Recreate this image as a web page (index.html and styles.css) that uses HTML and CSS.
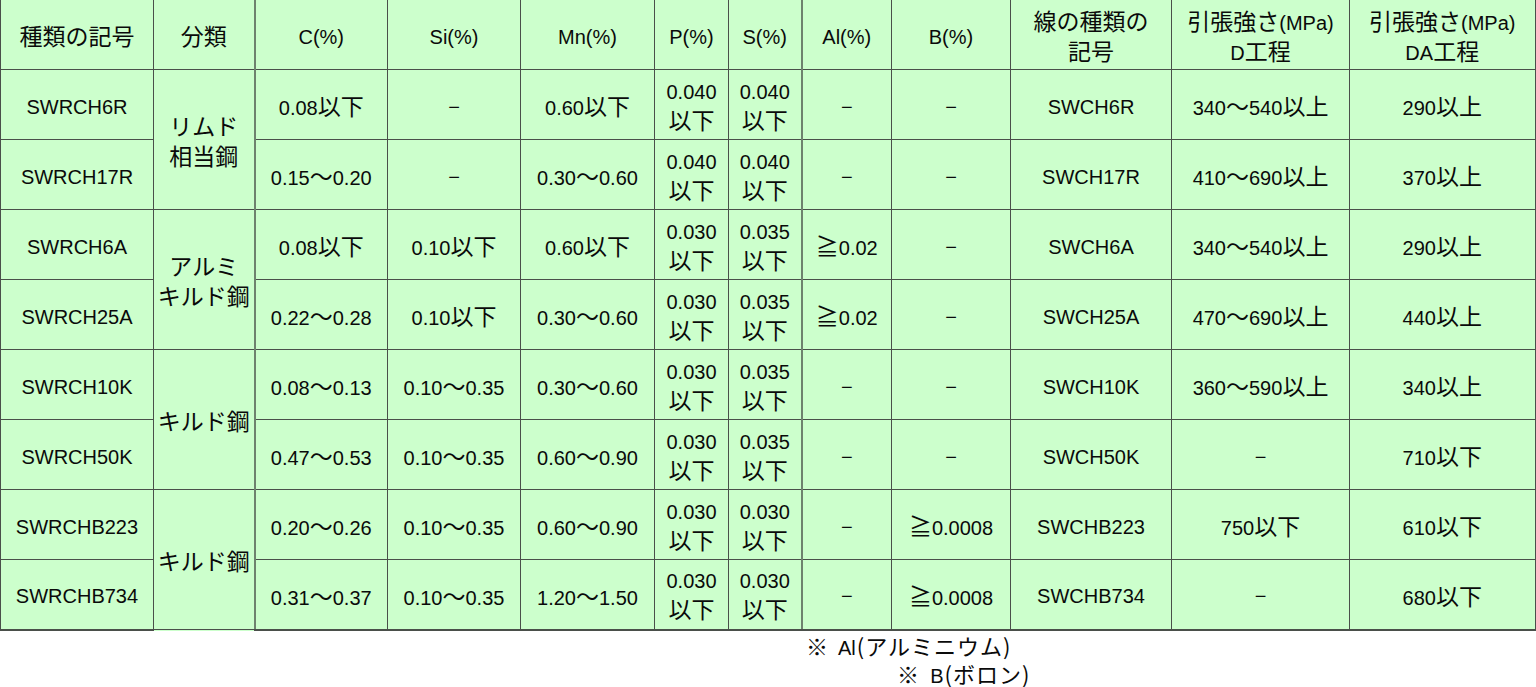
FILE: index.html
```html
<!DOCTYPE html>
<html lang="ja">
<head>
<meta charset="utf-8">
<title>SWRCH</title>
<link rel="stylesheet" href="styles.css">
</head>
<body>
<table class="spec">
  <colgroup>
    <col class="w1"><col class="w2"><col class="w3"><col class="w4"><col class="w5"><col class="w6">
    <col class="w7"><col class="w8"><col class="w9"><col class="w10"><col class="w11"><col class="w12">
  </colgroup>
  <tr class="head">
    <td><span class="j">種類の記号</span></td>
    <td><span class="j">分類</span></td>
    <td class="sep">C(%)</td>
    <td>Si(%)</td>
    <td>Mn(%)</td>
    <td>P(%)</td>
    <td>S(%)</td>
    <td class="sep">Al(%)</td>
    <td>B(%)</td>
    <td><span class="j">線の種類の</span><br><span class="j">記号</span></td>
    <td><span class="j">引張強さ</span>(MPa)<br>D<span class="j">工程</span></td>
    <td><span class="j">引張強さ</span>(MPa)<br>DA<span class="j">工程</span></td>
  </tr>
  <tr>
    <td>SWRCH6R</td>
    <td rowspan="2"><span class="j">リムド</span><br><span class="j">相当鋼</span></td>
    <td class="sep">0.08<span class="j">以下</span></td>
    <td>−</td>
    <td>0.60<span class="j">以下</span></td>
    <td>0.040<br><span class="j">以下</span></td>
    <td>0.040<br><span class="j">以下</span></td>
    <td class="sep">−</td>
    <td>−</td>
    <td>SWCH6R</td>
    <td>340<span class="j">～</span>540<span class="j">以上</span></td>
    <td>290<span class="j">以上</span></td>
  </tr>
  <tr>
    <td>SWRCH17R</td>
    <td class="sep">0.15<span class="j">～</span>0.20</td>
    <td>−</td>
    <td>0.30<span class="j">～</span>0.60</td>
    <td>0.040<br><span class="j">以下</span></td>
    <td>0.040<br><span class="j">以下</span></td>
    <td class="sep">−</td>
    <td>−</td>
    <td>SWCH17R</td>
    <td>410<span class="j">～</span>690<span class="j">以上</span></td>
    <td>370<span class="j">以上</span></td>
  </tr>
  <tr>
    <td>SWRCH6A</td>
    <td rowspan="2"><span class="j">アルミ</span><br><span class="j">キルド鋼</span></td>
    <td class="sep">0.08<span class="j">以下</span></td>
    <td>0.10<span class="j">以下</span></td>
    <td>0.60<span class="j">以下</span></td>
    <td>0.030<br><span class="j">以下</span></td>
    <td>0.035<br><span class="j">以下</span></td>
    <td class="sep"><span class="j">≧</span>0.02</td>
    <td>−</td>
    <td>SWCH6A</td>
    <td>340<span class="j">～</span>540<span class="j">以上</span></td>
    <td>290<span class="j">以上</span></td>
  </tr>
  <tr>
    <td>SWRCH25A</td>
    <td class="sep">0.22<span class="j">～</span>0.28</td>
    <td>0.10<span class="j">以下</span></td>
    <td>0.30<span class="j">～</span>0.60</td>
    <td>0.030<br><span class="j">以下</span></td>
    <td>0.035<br><span class="j">以下</span></td>
    <td class="sep"><span class="j">≧</span>0.02</td>
    <td>−</td>
    <td>SWCH25A</td>
    <td>470<span class="j">～</span>690<span class="j">以上</span></td>
    <td>440<span class="j">以上</span></td>
  </tr>
  <tr>
    <td>SWRCH10K</td>
    <td rowspan="2"><span class="j">キルド鋼</span></td>
    <td class="sep">0.08<span class="j">～</span>0.13</td>
    <td>0.10<span class="j">～</span>0.35</td>
    <td>0.30<span class="j">～</span>0.60</td>
    <td>0.030<br><span class="j">以下</span></td>
    <td>0.035<br><span class="j">以下</span></td>
    <td class="sep">−</td>
    <td>−</td>
    <td>SWCH10K</td>
    <td>360<span class="j">～</span>590<span class="j">以上</span></td>
    <td>340<span class="j">以上</span></td>
  </tr>
  <tr>
    <td>SWRCH50K</td>
    <td class="sep">0.47<span class="j">～</span>0.53</td>
    <td>0.10<span class="j">～</span>0.35</td>
    <td>0.60<span class="j">～</span>0.90</td>
    <td>0.030<br><span class="j">以下</span></td>
    <td>0.035<br><span class="j">以下</span></td>
    <td class="sep">−</td>
    <td>−</td>
    <td>SWCH50K</td>
    <td>−</td>
    <td>710<span class="j">以下</span></td>
  </tr>
  <tr>
    <td>SWRCHB223</td>
    <td rowspan="2"><span class="j">キルド鋼</span></td>
    <td class="sep">0.20<span class="j">～</span>0.26</td>
    <td>0.10<span class="j">～</span>0.35</td>
    <td>0.60<span class="j">～</span>0.90</td>
    <td>0.030<br><span class="j">以下</span></td>
    <td>0.030<br><span class="j">以下</span></td>
    <td class="sep">−</td>
    <td><span class="j">≧</span>0.0008</td>
    <td>SWCHB223</td>
    <td>750<span class="j">以下</span></td>
    <td>610<span class="j">以下</span></td>
  </tr>
  <tr>
    <td>SWRCHB734</td>
    <td class="sep">0.31<span class="j">～</span>0.37</td>
    <td>0.10<span class="j">～</span>0.35</td>
    <td>1.20<span class="j">～</span>1.50</td>
    <td>0.030<br><span class="j">以下</span></td>
    <td>0.030<br><span class="j">以下</span></td>
    <td class="sep">−</td>
    <td><span class="j">≧</span>0.0008</td>
    <td>SWCHB734</td>
    <td>−</td>
    <td>680<span class="j">以下</span></td>
  </tr>
</table>
<div class="notes">
  <div class="note n1"><span class="jn">※</span>&nbsp; Al<span class="jn sp">(アルミニウム)</span></div>
  <div class="note n2"><span class="jn">※</span>&nbsp; B<span class="jn sp">(ボロン)</span></div>
</div>
</body>
</html>
```

FILE: styles.css
```css
html, body {
  margin: 0;
  padding: 0;
  background: #ffffff;
}
body {
  font-family: "Liberation Sans", "Noto Sans CJK JP", sans-serif;
  font-size: 20px;
  color: #0a0a0a;
}
.j {
  font-family: "Noto Sans CJK JP", sans-serif;
  font-size: 23px;
}
.spec {
  border-collapse: collapse;
  table-layout: fixed;
  width: 1535px;
  margin-top: -1px;
  background: #ccffcc;
}
.w1 { width: 153px; }
.w2 { width: 101px; }
.w3 { width: 133px; }
.w4 { width: 133px; }
.w5 { width: 134px; }
.w6 { width: 74px; }
.w7 { width: 73px; }
.w8 { width: 90px; }
.w9 { width: 119px; }
.w10 { width: 161px; }
.w11 { width: 178px; }
.w12 { width: 186px; }
.spec tr { height: 70px; }
.spec td {
  border: 1px solid #4a4f4a;
  padding: 5px 0 0;
  text-align: center;
  vertical-align: middle;
  line-height: 27px;
  white-space: nowrap;
  overflow: hidden;
}
.spec td.sep {
  border-left: 2px solid #6e826e;
}
.spec tr:last-child td {
  border-bottom: 2px solid #4a4f4a;
}
.spec tr td:last-child {
  border-right: 2px solid #4a4f4a;
}
.notes {
  margin-top: 0;
  line-height: 28px;
}
.note {
  white-space: nowrap;
  height: 28px;
}
.jn {
  font-family: "Noto Sans CJK JP", sans-serif;
  font-size: 22px;
}
.jn.sp {
  letter-spacing: 1px;
  margin-left: 1px;
}
.n1 { padding-left: 806px; }
.n2 { padding-left: 897px; }
```
